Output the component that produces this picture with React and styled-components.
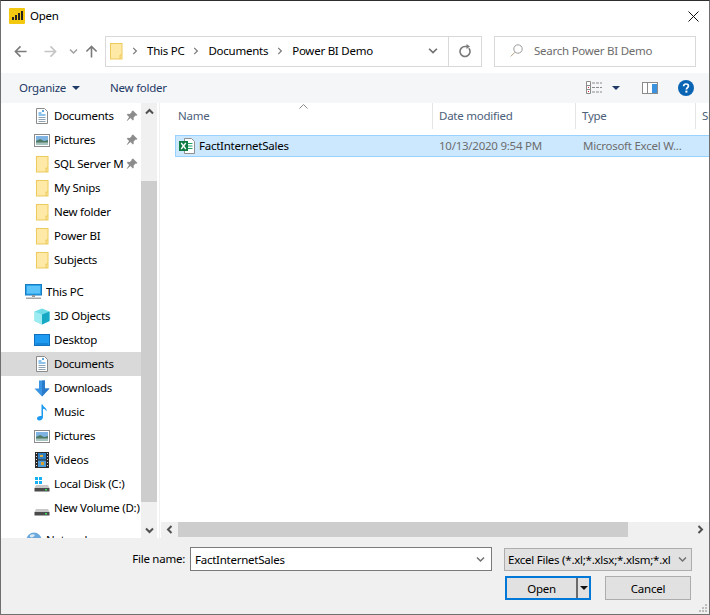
import React from 'react';
import styled, { createGlobalStyle } from 'styled-components';

const GlobalStyle = createGlobalStyle`
  html, body { margin: 0; padding: 0; background: #fff; }
  body {
    font-family: 'Noto Sans', 'Open Sans', sans-serif;
    font-size: 11.5px;
    letter-spacing: -0.25px;
    color: #000;
  }
  * { box-sizing: border-box; }
`;

const Dialog = styled.div`
  width: 710px;
  height: 615px;
  display: flex;
  flex-direction: column;
  position: relative;
  overflow: hidden;
  background: #fff;
  border: 1px solid #6f6f6f;
  border-top-color: #2e2e2e;
`;

const TitleBar = styled.div`
  height: 30px;
  flex: none;
  display: flex;
  align-items: center;
  padding: 0 10px 0 8px;
  gap: 5px;
`;

const TitleText = styled.span`
  flex: 1;
  padding-bottom: 2px;
`;

const NavBar = styled.div`
  height: 42px;
  flex: none;
  display: flex;
  align-items: center;
  padding: 0 12px 2px 12px;
`;

const NavButton = styled.span`
  width: ${p => p.$w || 16}px;
  margin-right: ${p => p.$mr || 0}px;
  display: flex;
  justify-content: center;
  flex: none;
`;

const AddressBox = styled.div`
  width: 377px;
  height: 31px;
  flex: none;
  display: flex;
  align-items: center;
  border: 1px solid #d9d9d9;
  padding-left: 3px;
`;

const Crumbs = styled.div`
  flex: 1;
  display: flex;
  align-items: center;
  padding: 0 10px 0 8px;
`;

const Crumb = styled.span`
  margin: 0 8px 0 8px;
  white-space: nowrap;
  padding-bottom: 1px;
`;

const Spacer = styled.span`
  flex: 1;
`;

const AddressEnd = styled.span`
  width: 33px;
  height: 100%;
  display: flex;
  align-items: center;
  justify-content: center;
  border-left: 1px solid #d9d9d9;
`;

const SearchBox = styled.div`
  width: 202px;
  height: 31px;
  flex: none;
  margin-left: 12px;
  display: flex;
  align-items: center;
  gap: 11px;
  padding-left: 15px;
  padding-bottom: 1px;
  border: 1px solid #d9d9d9;
  color: #6d6d6d;
`;

const Toolbar = styled.div`
  height: 30px;
  flex: none;
  display: flex;
  align-items: center;
  padding: 0 15px 1px 18px;
  background: #f5f6f7;
  color: #1e3a66;
`;

const ToolItem = styled.span`
  display: flex;
  align-items: center;
  gap: ${p => p.$gap || 6}px;
  margin-right: ${p => p.$mr || 0}px;
`;

const Main = styled.div`
  flex: 1;
  min-height: 0;
  display: flex;
`;

const Sidebar = styled.div`
  width: 140px;
  flex: none;
  overflow: hidden;
  padding-top: 1px;
`;

const NavRow = styled.div`
  height: 24px;
  display: flex;
  align-items: center;
  white-space: nowrap;
  overflow: hidden;
  padding-left: ${p => (p.$root ? 24 : 33)}px;
  margin-top: ${p => (p.$root ? 8 : 0)}px;
  background: ${p => (p.$active ? '#d9d9d9' : 'transparent')};
`;

const NavIcon = styled.span`
  width: ${p => (p.$root ? 17 : 16)}px;
  margin-right: 4px;
  display: flex;
  justify-content: center;
  flex: none;
`;

const NavLabel = styled.span`
  flex: 1;
  min-width: 0;
  overflow: hidden;
  padding-bottom: 1px;
`;

const PinSlot = styled.span`
  width: 17px;
  flex: none;
  display: flex;
  justify-content: center;
  padding-right: 1px;
`;

const VScroll = styled.div`
  width: 16px;
  flex: none;
  background: #f0f0f0;
  display: flex;
  flex-direction: column;
`;

const ScrollBtn = styled.div`
  flex: none;
  width: ${p => p.$w || 16}px;
  height: ${p => p.$h || 16}px;
  display: flex;
  align-items: center;
  justify-content: center;
`;

const VThumb = styled.div`
  height: 321px;
  margin-top: 62px;
  background: #cdcdcd;
`;

const VGap = styled.div`
  flex: 1;
`;

const SideGap = styled.div`
  width: 3px;
  flex: none;
  background: #fff;
  border-right: 1px solid #f0f0f0;
`;

const Content = styled.div`
  flex: 1;
  min-width: 0;
  display: flex;
  flex-direction: column;
  position: relative;
`;

const HeaderRow = styled.div`
  height: 26px;
  flex: none;
  display: flex;
  overflow: hidden;
  color: #4c607a;
`;

const HeaderCell = styled.div`
  width: ${p => p.$w}px;
  flex: none;
  padding-left: ${p => p.$pl || 6}px;
  padding-top: 5px;
  white-space: nowrap;
  border-right: 1px solid #e5e5e5;
`;

const SortCaret = styled.svg`
  position: absolute;
  left: 139px;
  top: 1px;
`;

const FileList = styled.div`
  flex: 1;
  padding: 6px 0 0 15px;
`;

const FileRow = styled.div`
  height: 22px;
  display: flex;
  align-items: center;
  background: #cce8ff;
  border: 1px solid #99d1ff;
  border-right: 0;
  color: #6d6d6d;
  white-space: nowrap;
  padding-bottom: 1px;
`;

const FileName = styled.div`
  width: 257px;
  flex: none;
  display: flex;
  align-items: center;
  gap: 4px;
  padding-left: 3px;
  color: #000;
`;

const FileCell = styled.div`
  width: ${p => p.$w}px;
  flex: none;
  padding-left: 6px;
`;

const HScroll = styled.div`
  height: 16px;
  flex: none;
  margin-left: 1px;
  display: flex;
  background: #f0f0f0;
`;

const HThumb = styled.div`
  width: 450px;
  background: #cdcdcd;
  height: 15px;
`;

const Bottom = styled.div`
  height: 76px;
  flex: none;
  background: #f0f0f0;
  padding: 9px 18px 0 126px;
  display: flex;
  flex-direction: column;
  gap: 6px;
  position: relative;
`;

const FieldRow = styled.div`
  display: flex;
  align-items: center;
`;

const FieldLabel = styled.label`
  width: 58px;
  margin-right: 5px;
  padding-bottom: 2px;
  flex: none;
  text-align: right;
  white-space: nowrap;
`;

const NameInput = styled.div`
  width: 302px;
  height: 24px;
  flex: none;
  display: flex;
  align-items: center;
  justify-content: space-between;
  padding: 0 6px 0 4px;
  background: #fff;
  border: 1px solid #7a7a7a;
`;

const FilterBox = styled.div`
  width: 188px;
  height: 23px;
  flex: none;
  margin-left: 12px;
  display: flex;
  align-items: center;
  justify-content: space-between;
  padding: 0 4px 0 3px;
  background: #e1e1e1;
  border: 1px solid #adadad;
  white-space: nowrap;
  overflow: hidden;
`;

const ButtonRow = styled.div`
  display: flex;
  justify-content: flex-end;
  gap: 14px;
  margin-top: -1px;
`;

const Button = styled.div`
  width: 86px;
  height: 24px;
  display: flex;
  align-items: center;
  justify-content: center;
  background: #e1e1e1;
  border: 1px solid #adadad;
`;

const SplitButton = styled(Button)`
  border: 2px solid #0078d7;
`;

const SplitLabel = styled.span`
  flex: 1;
  text-align: center;
`;

const SplitArrow = styled.span`
  width: 13px;
  height: 100%;
  display: flex;
  align-items: center;
  justify-content: center;
  border-left: 2px solid #6a6a6a;
`;

const Grip = styled.svg`
  position: absolute;
  right: 1px;
  bottom: 1px;
`;

const RotatedSvg = styled.svg`
  flex: none;
  transform: rotate(${p => p.$deg}deg);
`;

const LogoSvg = styled.svg`
  flex: none;
`;

const Folder = () => (
  <svg width="14" height="18" viewBox="0 0 14 18">
    <rect x="1.5" y="1.5" width="11.5" height="15.5" fill="#ffe9a6" stroke="#ecca5c" />
    <path d="M11 17v-4h2" fill="#ffe08a" stroke="#ecca5c" />
  </svg>
);

const DocIcon = () => (
  <svg width="14" height="18" viewBox="0 0 14 18">
    <path d="M1.5 1.5h8l3 3v12h-11z" fill="#fff" stroke="#8b8b8b" />
    <path d="M3.5 6h3M3.5 8h7" stroke="#1e88d8" />
    <path d="M3.5 10.5h7M3.5 12.5h7M3.5 14.5h7" stroke="#8fa3b5" />
    <path d="M7 3h2v2H7z" fill="#5aa7e0" />
  </svg>
);

const PictureIcon = () => (
  <svg width="16" height="13" viewBox="0 0 16 13">
    <rect x="0.5" y="0.5" width="15" height="12" fill="#fff" stroke="#8b8b8b" />
    <rect x="2" y="2" width="12" height="5" fill="#7fb4e2" />
    <path d="M2 7l4-2 4 2 4-1v5H2z" fill="#4f7a64" />
    <rect x="2" y="8.5" width="12" height="2.5" fill="#a8c4c0" />
  </svg>
);

const PcIcon = () => (
  <svg width="17" height="16" viewBox="0 0 17 16">
    <rect x="0.5" y="0.5" width="16" height="10.5" fill="#29a3ee" stroke="#1a7cc0" />
    <rect x="2" y="2" width="13" height="7.5" fill="#5cc4f8" />
    <rect x="7" y="11" width="3" height="2" fill="#9a9a9a" />
    <rect x="1" y="13.5" width="15" height="1.5" fill="#a8a8a8" />
  </svg>
);

const CubeIcon = () => (
  <svg width="16" height="17" viewBox="0 0 16 17">
    <path d="M8 0.5l7.5 3v9.5L8 16.5 0.5 13V3.5z" fill="#6fdce8" />
    <path d="M8 6.5l7.5-3v9.5L8 16.5z" fill="#17a8c4" />
    <path d="M0.5 3.5L8 6.5v10L0.5 13z" fill="#9cecf2" />
  </svg>
);

const DesktopIcon = () => (
  <svg width="16" height="12" viewBox="0 0 16 12">
    <rect x="0.5" y="0.5" width="15" height="11" fill="#1e9bf0" stroke="#0f70c0" />
    <rect x="2" y="9.5" width="12" height="1" fill="#0f70c0" />
  </svg>
);

const DownloadIcon = () => (
  <svg width="16" height="17" viewBox="0 0 16 17">
    <path d="M5 0.5h6v8h4.5L8 16.5 0.5 8.5H5z" fill="#3a94e4" />
    <path d="M8 0.5h3v8h4.5L8 16.5z" fill="#2a7cca" />
  </svg>
);

const MusicIcon = () => (
  <svg width="12" height="17" viewBox="0 0 12 17">
    <path d="M5.5 0.5h1.2c.4 2.5 4.8 3.5 3.8 7-.5-1.8-2-2.6-3.5-2.8V13c0 2-1.8 3.5-3.7 3.5C1.4 16.5 1 15.2 1 14.3c0-1.6 2-2.8 4.5-2.3z" fill="#1e9bf0" />
  </svg>
);

const VideoIcon = () => (
  <svg width="14" height="16" viewBox="0 0 14 16">
    <rect x="0" y="0" width="14" height="16" fill="#2b2b2b" />
    <rect x="3" y="1" width="8" height="6.5" fill="#2f7fc2" />
    <rect x="3" y="8.5" width="8" height="6.5" fill="#4b9bd8" />
    <rect x="5" y="3" width="3" height="2" fill="#e0b040" />
    <rect x="6" y="10" width="3" height="3" fill="#d8a030" />
    <path d="M1 1.5h1M1 4.5h1M1 7.5h1M1 10.5h1M1 13.5h1M12 1.5h1M12 4.5h1M12 7.5h1M12 10.5h1M12 13.5h1" stroke="#ddd" />
  </svg>
);

const DriveIcon = ({ windows }) => (
  <svg width="16" height="16" viewBox="0 0 16 16">
    {windows && <path d="M1 1h3v3H1zM5 1h3v3H5zM1 5h3v3H1zM5 5h3v3H5z" fill="#14b0f0" />}
    <path d="M2 9h12l1.5 3H.5z" fill="#c8c8c8" />
    <rect x="0.5" y="12" width="15" height="3.5" fill="#4a4a4a" />
    <rect x="11" y="13" width="2" height="1.5" fill="#33e060" />
  </svg>
);

const GlobeIcon = () => (
  <svg width="16" height="16" viewBox="0 0 16 16">
    <circle cx="8" cy="8" r="7.5" fill="#6aa8dc" />
    <path d="M4 3c2-1 4-1 5 0-1 2-3 3-5 2zM9 8c2-1 4 0 5 1-1 2-2 3-4 3z" fill="#d8e8f4" />
  </svg>
);

const PinIcon = () => (
  <svg width="12" height="12" viewBox="0 0 12 12">
    <path d="M7 0.5l4.5 4.5-1.2.7-.7-.2-2 2 .2 2-1 1-2.2-2.4L1 11l-.3-.3 2.4-3.6L.8 4.8l1-1 2 .2 2-2-.2-.7z" fill="#8c8c8c" />
  </svg>
);

const ExcelIcon = () => (
  <svg width="16" height="16" viewBox="0 0 16 16">
    <path d="M5.5 0.5h7l3 3v12h-10z" fill="#fff" stroke="#8f8f8f" />
    <path d="M9 5.5h4.5M9 8h4.5M9 10.5h4.5" stroke="#21a366" />
    <rect x="0" y="3" width="9" height="10" fill="#107c41" />
    <path d="M2.2 5l4.6 6M6.8 5l-4.6 6" stroke="#fff" strokeWidth="1.3" />
  </svg>
);

const PowerBiLogo = () => (
  <LogoSvg width="16" height="16" viewBox="0 0 16 16">
    <rect width="16" height="16" rx="1" fill="#f2c811" />
    <path d="M3 9h2v3H3zM6 7h2v5H6zM9 5h2v7H9zM12 3h2v9h-2z" fill="#252423" />
  </LogoSvg>
);

const Arrow = ({ dir, color }) => {
  const deg = { left: 0, right: 180, up: 90 }[dir];
  return (
    <RotatedSvg $deg={deg} width="13" height="13" viewBox="0 0 14 14">
      <path d="M1.5 7h12M7 1.5L1.5 7 7 12.5" fill="none" stroke={color} strokeWidth="1.7" />
    </RotatedSvg>
  );
};

const Chevron = ({ dir = 'down', color = '#606060', size = 9, width = 1.5 }) => {
  const deg = { down: 0, up: 180, left: 90, right: -90 }[dir];
  return (
    <RotatedSvg $deg={deg} width={size} height={size} viewBox="0 0 9 9">
      <path d="M1 2.5l3.5 3.5L8 2.5" fill="none" stroke={color} strokeWidth={width} />
    </RotatedSvg>
  );
};

const Caret = ({ color = '#1e3a66' }) => (
  <svg width="8" height="4" viewBox="0 0 8 4">
    <path d="M0 0h8L4 4z" fill={color} />
  </svg>
);

const pinned = [
  { label: 'Documents', icon: <DocIcon />, pin: true },
  { label: 'Pictures', icon: <PictureIcon />, pin: true },
  { label: 'SQL Server M', icon: <Folder />, pin: true },
  { label: 'My Snips', icon: <Folder /> },
  { label: 'New folder', icon: <Folder /> },
  { label: 'Power BI', icon: <Folder /> },
  { label: 'Subjects', icon: <Folder /> },
];

const pcItems = [
  { label: '3D Objects', icon: <CubeIcon /> },
  { label: 'Desktop', icon: <DesktopIcon /> },
  { label: 'Documents', icon: <DocIcon />, active: true },
  { label: 'Downloads', icon: <DownloadIcon /> },
  { label: 'Music', icon: <MusicIcon /> },
  { label: 'Pictures', icon: <PictureIcon /> },
  { label: 'Videos', icon: <VideoIcon /> },
  { label: 'Local Disk (C:)', icon: <DriveIcon windows /> },
  { label: 'New Volume (D:)', icon: <DriveIcon /> },
];

const SideItem = ({ item }) => (
  <NavRow $active={item.active}>
    <NavIcon>{item.icon}</NavIcon>
    <NavLabel>{item.label}</NavLabel>
    {item.pin && <PinSlot><PinIcon /></PinSlot>}
  </NavRow>
);

export default function App() {
  return (
    <>
      <GlobalStyle />
      <Dialog>
        <TitleBar>
          <PowerBiLogo />
          <TitleText>Open</TitleText>
          <svg width="11" height="11" viewBox="0 0 11 11">
            <path d="M0.5 0.5l10 10M10.5 0.5l-10 10" stroke="#111" />
          </svg>
        </TitleBar>

        <NavBar>
          <NavButton $w={14} $mr={16}><Arrow dir="left" color="#7a7a7a" /></NavButton>
          <NavButton $w={14} $mr={10}><Arrow dir="right" color="#c4c4c4" /></NavButton>
          <NavButton $w={12} $mr={5}><Chevron color="#a0a0a0" /></NavButton>
          <NavButton $w={14} $mr={7}><Arrow dir="up" color="#7a7a7a" /></NavButton>
          <AddressBox>
            <Folder />
            <Crumbs>
              <Chevron dir="right" color="#808080" size={8} />
              <Crumb>This PC</Crumb>
              <Chevron dir="right" color="#808080" size={8} />
              <Crumb>Documents</Crumb>
              <Chevron dir="right" color="#808080" size={8} />
              <Crumb>Power BI Demo</Crumb>
              <Spacer />
              <Chevron color="#707070" size={10} />
            </Crumbs>
            <AddressEnd>
              <svg width="13" height="14" viewBox="0 0 13 14">
                <path d="M9.8 4.2A5 5 0 1 1 6.5 2.5H9" fill="none" stroke="#7a7a7a" strokeWidth="1.6" />
                <path d="M7.5 0L11 2.5 7.5 5z" fill="#7a7a7a" />
              </svg>
            </AddressEnd>
          </AddressBox>
          <SearchBox>
            <svg width="13" height="13" viewBox="0 0 13 13">
              <circle cx="8" cy="5" r="4.2" fill="none" stroke="#9a9a9a" />
              <path d="M5 8.2L0.8 12.4" stroke="#b09a80" />
            </svg>
            <span>Search Power BI Demo</span>
          </SearchBox>
        </NavBar>

        <Toolbar>
          <ToolItem $mr={30}>Organize <Caret /></ToolItem>
          <ToolItem>New folder</ToolItem>
          <Spacer />
          <ToolItem $mr={22} $gap={10}>
            <svg width="16" height="13" viewBox="0 0 16 13">
              <path d="M0.5 0.5h4v12h-4zM0.5 4.5h4M0.5 8.5h4" fill="#fff" stroke="#8b8b8b" />
              <path d="M6 2h10M6 6.5h10M6 11h10" stroke="#8b8b8b" strokeDasharray="3 1" />
              <rect x="2" y="10" width="1" height="1" fill="#d03030" />
              <rect x="2" y="6" width="1" height="1" fill="#d03030" />
            </svg>
            <Caret />
          </ToolItem>
          <ToolItem $mr={20}>
            <svg width="16" height="12" viewBox="0 0 16 12">
              <rect x="0.5" y="0.5" width="15" height="11" fill="#fff" stroke="#8b8b8b" />
              <rect x="10" y="2" width="5" height="9" fill="#3b93e0" />
              <rect x="5" y="1" width="1" height="10" fill="#8b8b8b" />
            </svg>
          </ToolItem>
          <ToolItem>
            <svg width="16" height="16" viewBox="0 0 16 16">
              <circle cx="8" cy="8" r="8" fill="#0a64b4" />
              <path d="M5.6 6.2C5.7 4.6 6.8 4 8 4c1.4 0 2.4.8 2.4 2 0 1.6-2 1.7-2 3.5" fill="none" stroke="#fff" strokeWidth="1.7" />
              <rect x="7.4" y="10.6" width="2" height="2" fill="#fff" />
            </svg>
          </ToolItem>
        </Toolbar>

        <Main>
          <Sidebar>
            {pinned.map(item => <SideItem key={item.label} item={item} />)}
            <NavRow $root>
              <NavIcon $root><PcIcon /></NavIcon>
              <NavLabel>This PC</NavLabel>
            </NavRow>
            {pcItems.map(item => <SideItem key={item.label} item={item} />)}
            <NavRow $root>
              <NavIcon $root><GlobeIcon /></NavIcon>
              <NavLabel>Network</NavLabel>
            </NavRow>
          </Sidebar>
          <VScroll>
            <ScrollBtn $h={16}><Chevron dir="up" color="#505050" width={2} /></ScrollBtn>
            <VThumb />
            <VGap />
            <ScrollBtn $h={16}><Chevron color="#505050" width={2} /></ScrollBtn>
          </VScroll>
          <SideGap />
          <Content>
            <HeaderRow>
              <HeaderCell $w={273} $pl={18}>Name</HeaderCell>
              <HeaderCell $w={143}>Date modified</HeaderCell>
              <HeaderCell $w={120}>Type</HeaderCell>
              <HeaderCell $w={40}>Size</HeaderCell>
            </HeaderRow>
            <SortCaret width="9" height="5" viewBox="0 0 9 5">
              <path d="M0.5 4.5l4-4 4 4" fill="none" stroke="#8a8a8a" />
            </SortCaret>
            <FileList>
              <FileRow>
                <FileName><ExcelIcon />FactInternetSales</FileName>
                <FileCell $w={144}>10/13/2020 9:54 PM</FileCell>
                <FileCell $w={130}>Microsoft Excel W...</FileCell>
              </FileRow>
            </FileList>
            <HScroll>
              <ScrollBtn $w={17} $h={15}><Chevron dir="left" color="#505050" width={2} /></ScrollBtn>
              <HThumb />
              <VGap />
              <ScrollBtn $w={17} $h={15}><Chevron dir="right" color="#505050" width={2} /></ScrollBtn>
            </HScroll>
          </Content>
        </Main>

        <Bottom>
          <FieldRow>
            <FieldLabel>File name:</FieldLabel>
            <NameInput>
              <span>FactInternetSales</span>
              <Chevron color="#707070" />
            </NameInput>
            <FilterBox>
              <span>Excel Files (*.xl;*.xlsx;*.xlsm;*.xl</span>
              <Chevron color="#707070" />
            </FilterBox>
          </FieldRow>
          <ButtonRow>
            <SplitButton>
              <SplitLabel>Open</SplitLabel>
              <SplitArrow><Caret color="#111" /></SplitArrow>
            </SplitButton>
            <Button>Cancel</Button>
          </ButtonRow>
          <Grip width="10" height="10" viewBox="0 0 10 10">
            <path d="M7 1h2v2H7zM4 4h2v2H4zM7 4h2v2H7zM1 7h2v2H1zM4 7h2v2H4zM7 7h2v2H7z" fill="#bdbdbd" />
          </Grip>
        </Bottom>
      </Dialog>
    </>
  );
}
